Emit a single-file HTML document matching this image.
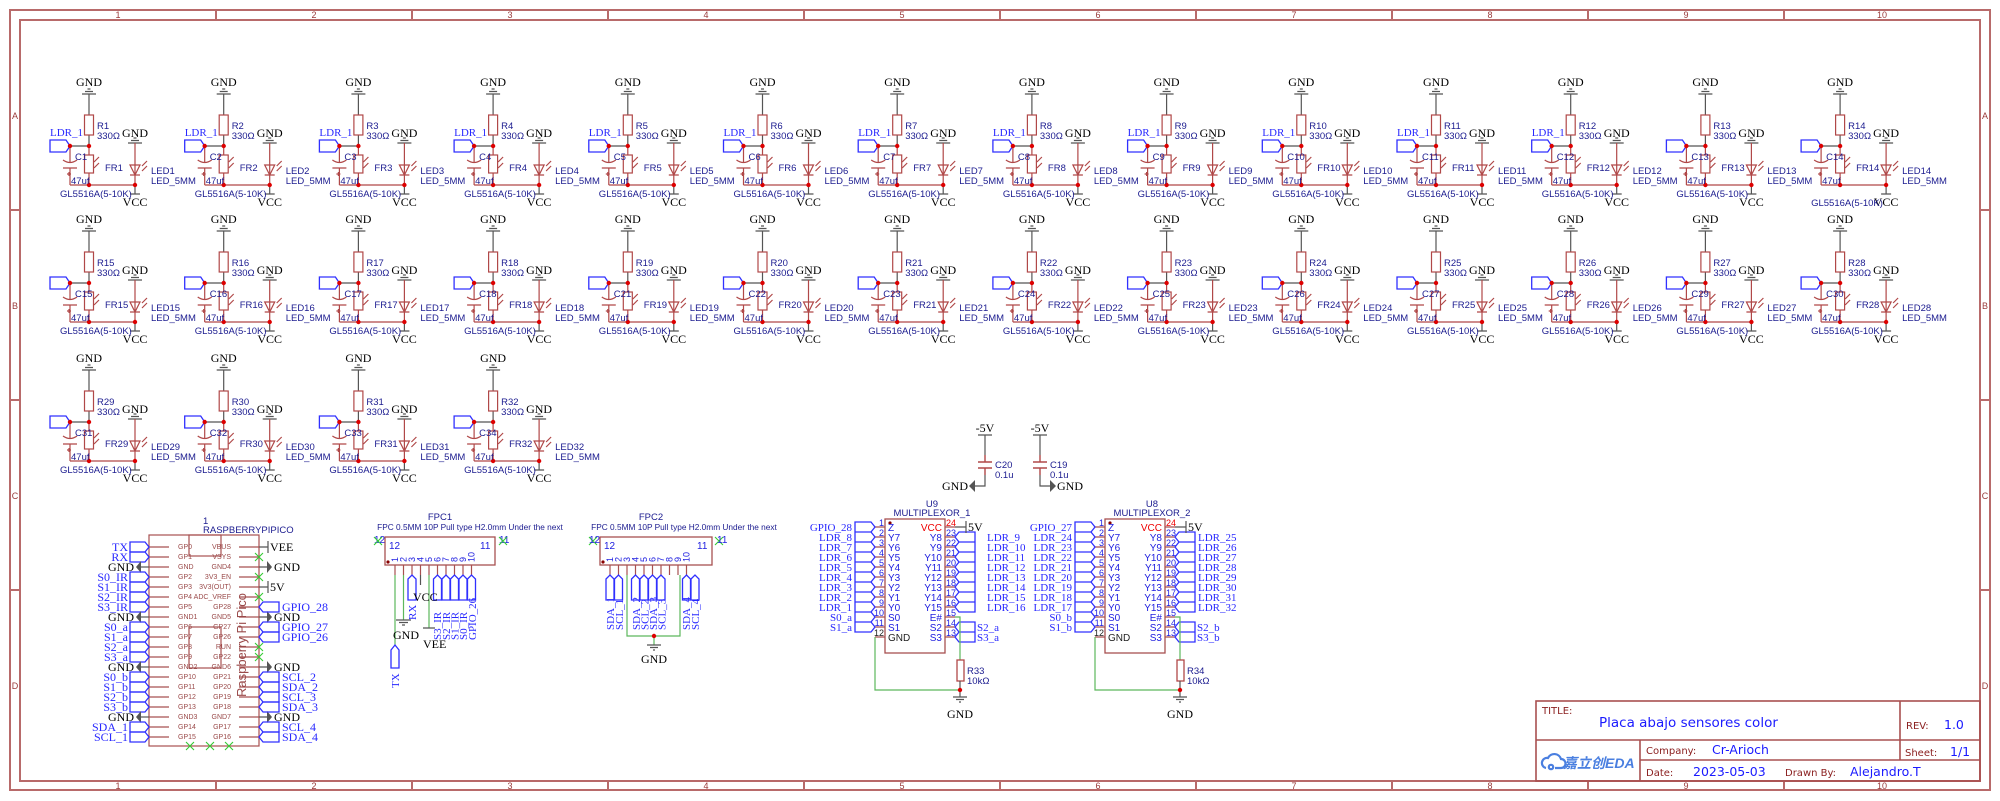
<!DOCTYPE html>
<html><head><meta charset="utf-8">
<style>
html,body{margin:0;padding:0;background:#fff;}
svg{display:block;}
.g{font-family:"Liberation Serif",serif;font-size:12px;fill:#000;text-anchor:middle;}
.gl{font-family:"Liberation Serif",serif;font-size:12px;fill:#000;}
.gr{font-family:"Liberation Serif",serif;font-size:12px;fill:#000;text-anchor:end;}
.l{font-family:"Liberation Sans",sans-serif;font-size:9.5px;fill:#1b1b8f;}
.lc{font-family:"Liberation Sans",sans-serif;font-size:9.5px;fill:#1b1b8f;text-anchor:middle;}
.d{font-family:"Liberation Sans",sans-serif;font-size:8.3px;fill:#1b1b8f;text-anchor:middle;}
.b{font-family:"Liberation Serif",serif;font-size:11px;fill:#2828ff;}
.br{font-family:"Liberation Serif",serif;font-size:11px;fill:#2828ff;text-anchor:end;}
.p{font-family:"Liberation Sans",sans-serif;font-size:7px;fill:#9a4a4a;}
.pr{font-family:"Liberation Sans",sans-serif;font-size:7px;fill:#9a4a4a;text-anchor:end;}
.f{font-family:"Liberation Sans",sans-serif;font-size:9px;fill:#9a3a3a;text-anchor:middle;}
.u{font-family:"Liberation Sans",sans-serif;font-size:11px;fill:#2020e0;}
.ur{font-family:"Liberation Sans",sans-serif;font-size:11px;fill:#2020e0;text-anchor:end;}
.t{font-family:"DejaVu Sans","Liberation Sans",sans-serif;font-size:11px;fill:#8b2020;}
.tv{font-family:"DejaVu Sans","Liberation Sans",sans-serif;font-size:12.5px;fill:#1a1aff;}
</style></head><body>
<svg width="2000" height="801" viewBox="0 0 2000 801" xmlns="http://www.w3.org/2000/svg">
<defs>
<g id="cell">
 <g stroke="#555" stroke-width="1.2" fill="none">
  <path d="M0,-52V-31M0,-11V0M-19,0H0M-1.5,-57H1.5M-4,-54.5H4M-7,-52H7"/>
  <path d="M44.5,-8H47.5M42,-5.5H50M39,-3H53M46,39V48M41,48H51"/>
 </g>
 <g stroke="#b04848" stroke-width="1.2" fill="none">
  <rect x="-4.5" y="-31" width="9" height="20"/>
  <path d="M0,0V9M0,27V39M-19,39H46M-19,0V16M-19,22V39M46,-3V39"/>
  <rect x="-4.5" y="9" width="9" height="18"/>
  <path d="M10,11L5,16M10,17L5,22M-26,14Q-19,19 -12,14M-26,22H-12"/>
  <path d="M41,19H51L46,29ZM41,29H51M53,20L58,15M53,25L58,20"/>
  <path d="M-22,28H-18M-20,26V30"/>
 </g>
 <polygon points="-39,-6 -23,-6 -19,0 -23,6 -39,6" fill="none" stroke="#3030ff" stroke-width="1.3"/>
 <g fill="#d00"><circle cx="0" cy="0" r="2.2"/><circle cx="-19" cy="0" r="2.2"/><circle cx="0" cy="39" r="2.2"/><circle cx="46" cy="39" r="2.2"/></g>
</g>
<g id="lf"><polygon points="0,-5 15,-5 19,0 15,5 0,5" fill="none" stroke="#3030ff" stroke-width="1.3"/></g>
<g id="rf"><polygon points="0,0 4,-5 20,-5 20,5 4,5" fill="none" stroke="#3030ff" stroke-width="1.3"/></g>
<g id="gl"><path d="M149,0H141" stroke="#555" stroke-width="1.2"/><polygon points="141,-6 141,6 136,0" fill="#555"/></g>
</defs>

<!-- frame -->
<g fill="none" stroke="#b86a6a" stroke-width="2">
 <rect x="10" y="10" width="1980" height="780"/>
 <rect x="20" y="20" width="1960" height="761"/>
 <path d="M216,10V20M412,10V20M608,10V20M804,10V20M1000,10V20M1196,10V20M1392,10V20M1588,10V20M1784,10V20"/>
 <path d="M216,781V790M412,781V790M608,781V790M804,781V790M1000,781V790M1196,781V790M1392,781V790M1588,781V790M1784,781V790"/>
 <path d="M10,210H20M10,400H20M10,590H20M1980,210H1990M1980,400H1990M1980,590H1990"/>
</g>
<g class="f">
 <text x="118" y="18">1</text><text x="314" y="18">2</text><text x="510" y="18">3</text><text x="706" y="18">4</text><text x="902" y="18">5</text><text x="1098" y="18">6</text><text x="1294" y="18">7</text><text x="1490" y="18">8</text><text x="1686" y="18">9</text><text x="1882" y="18">10</text>
 <text x="118" y="789">1</text><text x="314" y="789">2</text><text x="510" y="789">3</text><text x="706" y="789">4</text><text x="902" y="789">5</text><text x="1098" y="789">6</text><text x="1294" y="789">7</text><text x="1490" y="789">8</text><text x="1686" y="789">9</text><text x="1882" y="789">10</text>
 <text x="15" y="119">A</text><text x="15" y="309">B</text><text x="15" y="499">C</text><text x="15" y="689">D</text>
 <text x="1985" y="119">A</text><text x="1985" y="309">B</text><text x="1985" y="499">C</text><text x="1985" y="689">D</text>
</g>

<!-- ROW 1 -->
<g transform="translate(89,146)"><use href="#cell"/><text class="g" x="0" y="-60">GND</text><text class="g" x="46" y="-9">GND</text><text class="g" x="46" y="60">VCC</text><text class="l" x="8" y="-17">R1</text><text class="l" x="8" y="-7">330Ω</text><text class="l" x="-14" y="14">C1</text><text class="l" x="16" y="25">FR1</text><text class="l" x="62" y="28">LED1</text><text class="l" x="62" y="38">LED_5MM</text><text class="l" x="-18" y="38">47uf</text><text class="l" x="-29" y="51">GL5516A(5-10K)</text><text class="b" x="-39" y="-10">LDR_1</text></g>
<g transform="translate(223.7,146)"><use href="#cell"/><text class="g" x="0" y="-60">GND</text><text class="g" x="46" y="-9">GND</text><text class="g" x="46" y="60">VCC</text><text class="l" x="8" y="-17">R2</text><text class="l" x="8" y="-7">330Ω</text><text class="l" x="-14" y="14">C2</text><text class="l" x="16" y="25">FR2</text><text class="l" x="62" y="28">LED2</text><text class="l" x="62" y="38">LED_5MM</text><text class="l" x="-18" y="38">47uf</text><text class="l" x="-29" y="51">GL5516A(5-10K)</text><text class="b" x="-39" y="-10">LDR_1</text></g>
<g transform="translate(358.4,146)"><use href="#cell"/><text class="g" x="0" y="-60">GND</text><text class="g" x="46" y="-9">GND</text><text class="g" x="46" y="60">VCC</text><text class="l" x="8" y="-17">R3</text><text class="l" x="8" y="-7">330Ω</text><text class="l" x="-14" y="14">C3</text><text class="l" x="16" y="25">FR3</text><text class="l" x="62" y="28">LED3</text><text class="l" x="62" y="38">LED_5MM</text><text class="l" x="-18" y="38">47uf</text><text class="l" x="-29" y="51">GL5516A(5-10K)</text><text class="b" x="-39" y="-10">LDR_1</text></g>
<g transform="translate(493.1,146)"><use href="#cell"/><text class="g" x="0" y="-60">GND</text><text class="g" x="46" y="-9">GND</text><text class="g" x="46" y="60">VCC</text><text class="l" x="8" y="-17">R4</text><text class="l" x="8" y="-7">330Ω</text><text class="l" x="-14" y="14">C4</text><text class="l" x="16" y="25">FR4</text><text class="l" x="62" y="28">LED4</text><text class="l" x="62" y="38">LED_5MM</text><text class="l" x="-18" y="38">47uf</text><text class="l" x="-29" y="51">GL5516A(5-10K)</text><text class="b" x="-39" y="-10">LDR_1</text></g>
<g transform="translate(627.8,146)"><use href="#cell"/><text class="g" x="0" y="-60">GND</text><text class="g" x="46" y="-9">GND</text><text class="g" x="46" y="60">VCC</text><text class="l" x="8" y="-17">R5</text><text class="l" x="8" y="-7">330Ω</text><text class="l" x="-14" y="14">C5</text><text class="l" x="16" y="25">FR5</text><text class="l" x="62" y="28">LED5</text><text class="l" x="62" y="38">LED_5MM</text><text class="l" x="-18" y="38">47uf</text><text class="l" x="-29" y="51">GL5516A(5-10K)</text><text class="b" x="-39" y="-10">LDR_1</text></g>
<g transform="translate(762.5,146)"><use href="#cell"/><text class="g" x="0" y="-60">GND</text><text class="g" x="46" y="-9">GND</text><text class="g" x="46" y="60">VCC</text><text class="l" x="8" y="-17">R6</text><text class="l" x="8" y="-7">330Ω</text><text class="l" x="-14" y="14">C6</text><text class="l" x="16" y="25">FR6</text><text class="l" x="62" y="28">LED6</text><text class="l" x="62" y="38">LED_5MM</text><text class="l" x="-18" y="38">47uf</text><text class="l" x="-29" y="51">GL5516A(5-10K)</text><text class="b" x="-39" y="-10">LDR_1</text></g>
<g transform="translate(897.2,146)"><use href="#cell"/><text class="g" x="0" y="-60">GND</text><text class="g" x="46" y="-9">GND</text><text class="g" x="46" y="60">VCC</text><text class="l" x="8" y="-17">R7</text><text class="l" x="8" y="-7">330Ω</text><text class="l" x="-14" y="14">C7</text><text class="l" x="16" y="25">FR7</text><text class="l" x="62" y="28">LED7</text><text class="l" x="62" y="38">LED_5MM</text><text class="l" x="-18" y="38">47uf</text><text class="l" x="-29" y="51">GL5516A(5-10K)</text><text class="b" x="-39" y="-10">LDR_1</text></g>
<g transform="translate(1031.9,146)"><use href="#cell"/><text class="g" x="0" y="-60">GND</text><text class="g" x="46" y="-9">GND</text><text class="g" x="46" y="60">VCC</text><text class="l" x="8" y="-17">R8</text><text class="l" x="8" y="-7">330Ω</text><text class="l" x="-14" y="14">C8</text><text class="l" x="16" y="25">FR8</text><text class="l" x="62" y="28">LED8</text><text class="l" x="62" y="38">LED_5MM</text><text class="l" x="-18" y="38">47uf</text><text class="l" x="-29" y="51">GL5516A(5-10K)</text><text class="b" x="-39" y="-10">LDR_1</text></g>
<g transform="translate(1166.6,146)"><use href="#cell"/><text class="g" x="0" y="-60">GND</text><text class="g" x="46" y="-9">GND</text><text class="g" x="46" y="60">VCC</text><text class="l" x="8" y="-17">R9</text><text class="l" x="8" y="-7">330Ω</text><text class="l" x="-14" y="14">C9</text><text class="l" x="16" y="25">FR9</text><text class="l" x="62" y="28">LED9</text><text class="l" x="62" y="38">LED_5MM</text><text class="l" x="-18" y="38">47uf</text><text class="l" x="-29" y="51">GL5516A(5-10K)</text><text class="b" x="-39" y="-10">LDR_1</text></g>
<g transform="translate(1301.3,146)"><use href="#cell"/><text class="g" x="0" y="-60">GND</text><text class="g" x="46" y="-9">GND</text><text class="g" x="46" y="60">VCC</text><text class="l" x="8" y="-17">R10</text><text class="l" x="8" y="-7">330Ω</text><text class="l" x="-14" y="14">C10</text><text class="l" x="16" y="25">FR10</text><text class="l" x="62" y="28">LED10</text><text class="l" x="62" y="38">LED_5MM</text><text class="l" x="-18" y="38">47uf</text><text class="l" x="-29" y="51">GL5516A(5-10K)</text><text class="b" x="-39" y="-10">LDR_1</text></g>
<g transform="translate(1436,146)"><use href="#cell"/><text class="g" x="0" y="-60">GND</text><text class="g" x="46" y="-9">GND</text><text class="g" x="46" y="60">VCC</text><text class="l" x="8" y="-17">R11</text><text class="l" x="8" y="-7">330Ω</text><text class="l" x="-14" y="14">C11</text><text class="l" x="16" y="25">FR11</text><text class="l" x="62" y="28">LED11</text><text class="l" x="62" y="38">LED_5MM</text><text class="l" x="-18" y="38">47uf</text><text class="l" x="-29" y="51">GL5516A(5-10K)</text><text class="b" x="-39" y="-10">LDR_1</text></g>
<g transform="translate(1570.7,146)"><use href="#cell"/><text class="g" x="0" y="-60">GND</text><text class="g" x="46" y="-9">GND</text><text class="g" x="46" y="60">VCC</text><text class="l" x="8" y="-17">R12</text><text class="l" x="8" y="-7">330Ω</text><text class="l" x="-14" y="14">C12</text><text class="l" x="16" y="25">FR12</text><text class="l" x="62" y="28">LED12</text><text class="l" x="62" y="38">LED_5MM</text><text class="l" x="-18" y="38">47uf</text><text class="l" x="-29" y="51">GL5516A(5-10K)</text><text class="b" x="-39" y="-10">LDR_1</text></g>
<g transform="translate(1705.4,146)"><use href="#cell"/><text class="g" x="0" y="-60">GND</text><text class="g" x="46" y="-9">GND</text><text class="g" x="46" y="60">VCC</text><text class="l" x="8" y="-17">R13</text><text class="l" x="8" y="-7">330Ω</text><text class="l" x="-14" y="14">C13</text><text class="l" x="16" y="25">FR13</text><text class="l" x="62" y="28">LED13</text><text class="l" x="62" y="38">LED_5MM</text><text class="l" x="-18" y="38">47uf</text><text class="l" x="-29" y="51">GL5516A(5-10K)</text></g>
<g transform="translate(1840.1,146)"><use href="#cell"/><text class="g" x="0" y="-60">GND</text><text class="g" x="46" y="-9">GND</text><text class="g" x="46" y="60">VCC</text><text class="l" x="8" y="-17">R14</text><text class="l" x="8" y="-7">330Ω</text><text class="l" x="-14" y="14">C14</text><text class="l" x="16" y="25">FR14</text><text class="l" x="62" y="28">LED14</text><text class="l" x="62" y="38">LED_5MM</text><text class="l" x="-18" y="38">47uf</text><text class="l" x="-29" y="60">GL5516A(5-10K)</text></g>

<!-- ROW 2 -->
<g transform="translate(89,283)"><use href="#cell"/><text class="g" x="0" y="-60">GND</text><text class="g" x="46" y="-9">GND</text><text class="g" x="46" y="60">VCC</text><text class="l" x="8" y="-17">R15</text><text class="l" x="8" y="-7">330Ω</text><text class="l" x="-14" y="14">C15</text><text class="l" x="16" y="25">FR15</text><text class="l" x="62" y="28">LED15</text><text class="l" x="62" y="38">LED_5MM</text><text class="l" x="-18" y="38">47uf</text><text class="l" x="-29" y="51">GL5516A(5-10K)</text></g>
<g transform="translate(223.7,283)"><use href="#cell"/><text class="g" x="0" y="-60">GND</text><text class="g" x="46" y="-9">GND</text><text class="g" x="46" y="60">VCC</text><text class="l" x="8" y="-17">R16</text><text class="l" x="8" y="-7">330Ω</text><text class="l" x="-14" y="14">C16</text><text class="l" x="16" y="25">FR16</text><text class="l" x="62" y="28">LED16</text><text class="l" x="62" y="38">LED_5MM</text><text class="l" x="-18" y="38">47uf</text><text class="l" x="-29" y="51">GL5516A(5-10K)</text></g>
<g transform="translate(358.4,283)"><use href="#cell"/><text class="g" x="0" y="-60">GND</text><text class="g" x="46" y="-9">GND</text><text class="g" x="46" y="60">VCC</text><text class="l" x="8" y="-17">R17</text><text class="l" x="8" y="-7">330Ω</text><text class="l" x="-14" y="14">C17</text><text class="l" x="16" y="25">FR17</text><text class="l" x="62" y="28">LED17</text><text class="l" x="62" y="38">LED_5MM</text><text class="l" x="-18" y="38">47uf</text><text class="l" x="-29" y="51">GL5516A(5-10K)</text></g>
<g transform="translate(493.1,283)"><use href="#cell"/><text class="g" x="0" y="-60">GND</text><text class="g" x="46" y="-9">GND</text><text class="g" x="46" y="60">VCC</text><text class="l" x="8" y="-17">R18</text><text class="l" x="8" y="-7">330Ω</text><text class="l" x="-14" y="14">C18</text><text class="l" x="16" y="25">FR18</text><text class="l" x="62" y="28">LED18</text><text class="l" x="62" y="38">LED_5MM</text><text class="l" x="-18" y="38">47uf</text><text class="l" x="-29" y="51">GL5516A(5-10K)</text></g>
<g transform="translate(627.8,283)"><use href="#cell"/><text class="g" x="0" y="-60">GND</text><text class="g" x="46" y="-9">GND</text><text class="g" x="46" y="60">VCC</text><text class="l" x="8" y="-17">R19</text><text class="l" x="8" y="-7">330Ω</text><text class="l" x="-14" y="14">C21</text><text class="l" x="16" y="25">FR19</text><text class="l" x="62" y="28">LED19</text><text class="l" x="62" y="38">LED_5MM</text><text class="l" x="-18" y="38">47uf</text><text class="l" x="-29" y="51">GL5516A(5-10K)</text></g>
<g transform="translate(762.5,283)"><use href="#cell"/><text class="g" x="0" y="-60">GND</text><text class="g" x="46" y="-9">GND</text><text class="g" x="46" y="60">VCC</text><text class="l" x="8" y="-17">R20</text><text class="l" x="8" y="-7">330Ω</text><text class="l" x="-14" y="14">C22</text><text class="l" x="16" y="25">FR20</text><text class="l" x="62" y="28">LED20</text><text class="l" x="62" y="38">LED_5MM</text><text class="l" x="-18" y="38">47uf</text><text class="l" x="-29" y="51">GL5516A(5-10K)</text></g>
<g transform="translate(897.2,283)"><use href="#cell"/><text class="g" x="0" y="-60">GND</text><text class="g" x="46" y="-9">GND</text><text class="g" x="46" y="60">VCC</text><text class="l" x="8" y="-17">R21</text><text class="l" x="8" y="-7">330Ω</text><text class="l" x="-14" y="14">C23</text><text class="l" x="16" y="25">FR21</text><text class="l" x="62" y="28">LED21</text><text class="l" x="62" y="38">LED_5MM</text><text class="l" x="-18" y="38">47uf</text><text class="l" x="-29" y="51">GL5516A(5-10K)</text></g>
<g transform="translate(1031.9,283)"><use href="#cell"/><text class="g" x="0" y="-60">GND</text><text class="g" x="46" y="-9">GND</text><text class="g" x="46" y="60">VCC</text><text class="l" x="8" y="-17">R22</text><text class="l" x="8" y="-7">330Ω</text><text class="l" x="-14" y="14">C24</text><text class="l" x="16" y="25">FR22</text><text class="l" x="62" y="28">LED22</text><text class="l" x="62" y="38">LED_5MM</text><text class="l" x="-18" y="38">47uf</text><text class="l" x="-29" y="51">GL5516A(5-10K)</text></g>
<g transform="translate(1166.6,283)"><use href="#cell"/><text class="g" x="0" y="-60">GND</text><text class="g" x="46" y="-9">GND</text><text class="g" x="46" y="60">VCC</text><text class="l" x="8" y="-17">R23</text><text class="l" x="8" y="-7">330Ω</text><text class="l" x="-14" y="14">C25</text><text class="l" x="16" y="25">FR23</text><text class="l" x="62" y="28">LED23</text><text class="l" x="62" y="38">LED_5MM</text><text class="l" x="-18" y="38">47uf</text><text class="l" x="-29" y="51">GL5516A(5-10K)</text></g>
<g transform="translate(1301.3,283)"><use href="#cell"/><text class="g" x="0" y="-60">GND</text><text class="g" x="46" y="-9">GND</text><text class="g" x="46" y="60">VCC</text><text class="l" x="8" y="-17">R24</text><text class="l" x="8" y="-7">330Ω</text><text class="l" x="-14" y="14">C26</text><text class="l" x="16" y="25">FR24</text><text class="l" x="62" y="28">LED24</text><text class="l" x="62" y="38">LED_5MM</text><text class="l" x="-18" y="38">47uf</text><text class="l" x="-29" y="51">GL5516A(5-10K)</text></g>
<g transform="translate(1436,283)"><use href="#cell"/><text class="g" x="0" y="-60">GND</text><text class="g" x="46" y="-9">GND</text><text class="g" x="46" y="60">VCC</text><text class="l" x="8" y="-17">R25</text><text class="l" x="8" y="-7">330Ω</text><text class="l" x="-14" y="14">C27</text><text class="l" x="16" y="25">FR25</text><text class="l" x="62" y="28">LED25</text><text class="l" x="62" y="38">LED_5MM</text><text class="l" x="-18" y="38">47uf</text><text class="l" x="-29" y="51">GL5516A(5-10K)</text></g>
<g transform="translate(1570.7,283)"><use href="#cell"/><text class="g" x="0" y="-60">GND</text><text class="g" x="46" y="-9">GND</text><text class="g" x="46" y="60">VCC</text><text class="l" x="8" y="-17">R26</text><text class="l" x="8" y="-7">330Ω</text><text class="l" x="-14" y="14">C28</text><text class="l" x="16" y="25">FR26</text><text class="l" x="62" y="28">LED26</text><text class="l" x="62" y="38">LED_5MM</text><text class="l" x="-18" y="38">47uf</text><text class="l" x="-29" y="51">GL5516A(5-10K)</text></g>
<g transform="translate(1705.4,283)"><use href="#cell"/><text class="g" x="0" y="-60">GND</text><text class="g" x="46" y="-9">GND</text><text class="g" x="46" y="60">VCC</text><text class="l" x="8" y="-17">R27</text><text class="l" x="8" y="-7">330Ω</text><text class="l" x="-14" y="14">C29</text><text class="l" x="16" y="25">FR27</text><text class="l" x="62" y="28">LED27</text><text class="l" x="62" y="38">LED_5MM</text><text class="l" x="-18" y="38">47uf</text><text class="l" x="-29" y="51">GL5516A(5-10K)</text></g>
<g transform="translate(1840.1,283)"><use href="#cell"/><text class="g" x="0" y="-60">GND</text><text class="g" x="46" y="-9">GND</text><text class="g" x="46" y="60">VCC</text><text class="l" x="8" y="-17">R28</text><text class="l" x="8" y="-7">330Ω</text><text class="l" x="-14" y="14">C30</text><text class="l" x="16" y="25">FR28</text><text class="l" x="62" y="28">LED28</text><text class="l" x="62" y="38">LED_5MM</text><text class="l" x="-18" y="38">47uf</text><text class="l" x="-29" y="51">GL5516A(5-10K)</text></g>

<!-- ROW 3 -->
<g transform="translate(89,422)"><use href="#cell"/><text class="g" x="0" y="-60">GND</text><text class="g" x="46" y="-9">GND</text><text class="g" x="46" y="60">VCC</text><text class="l" x="8" y="-17">R29</text><text class="l" x="8" y="-7">330Ω</text><text class="l" x="-14" y="14">C31</text><text class="l" x="16" y="25">FR29</text><text class="l" x="62" y="28">LED29</text><text class="l" x="62" y="38">LED_5MM</text><text class="l" x="-18" y="38">47uf</text><text class="l" x="-29" y="51">GL5516A(5-10K)</text></g>
<g transform="translate(223.7,422)"><use href="#cell"/><text class="g" x="0" y="-60">GND</text><text class="g" x="46" y="-9">GND</text><text class="g" x="46" y="60">VCC</text><text class="l" x="8" y="-17">R30</text><text class="l" x="8" y="-7">330Ω</text><text class="l" x="-14" y="14">C32</text><text class="l" x="16" y="25">FR30</text><text class="l" x="62" y="28">LED30</text><text class="l" x="62" y="38">LED_5MM</text><text class="l" x="-18" y="38">47uf</text><text class="l" x="-29" y="51">GL5516A(5-10K)</text></g>
<g transform="translate(358.4,422)"><use href="#cell"/><text class="g" x="0" y="-60">GND</text><text class="g" x="46" y="-9">GND</text><text class="g" x="46" y="60">VCC</text><text class="l" x="8" y="-17">R31</text><text class="l" x="8" y="-7">330Ω</text><text class="l" x="-14" y="14">C33</text><text class="l" x="16" y="25">FR31</text><text class="l" x="62" y="28">LED31</text><text class="l" x="62" y="38">LED_5MM</text><text class="l" x="-18" y="38">47uf</text><text class="l" x="-29" y="51">GL5516A(5-10K)</text></g>
<g transform="translate(493.1,422)"><use href="#cell"/><text class="g" x="0" y="-60">GND</text><text class="g" x="46" y="-9">GND</text><text class="g" x="46" y="60">VCC</text><text class="l" x="8" y="-17">R32</text><text class="l" x="8" y="-7">330Ω</text><text class="l" x="-14" y="14">C34</text><text class="l" x="16" y="25">FR32</text><text class="l" x="62" y="28">LED32</text><text class="l" x="62" y="38">LED_5MM</text><text class="l" x="-18" y="38">47uf</text><text class="l" x="-29" y="51">GL5516A(5-10K)</text></g>

<!-- RASPBERRY PI PICO -->
<text class="l" x="203" y="524">1</text>
<text class="l" x="203" y="533">RASPBERRYPIPICO</text>
<g fill="none" stroke="#a85050" stroke-width="1.2">
 <rect x="149" y="535" width="110" height="211"/>
 <rect x="189" y="535" width="32" height="21"/>
 <rect x="189" y="627" width="32" height="41"/>
 <path d="M149,547H169M149,557H169M149,567H169M149,577H169M149,587H169M149,597H169M149,607H169M149,617H169M149,627H169M149,637H169M149,647H169M149,657H169M149,667H169M149,677H169M149,687H169M149,697H169M149,707H169M149,717H169M149,727H169M149,737H169"/>
 <path d="M239,547H259M239,557H259M239,567H259M239,577H259M239,587H259M239,597H259M239,607H259M239,617H259M239,627H259M239,637H259M239,647H259M239,657H259M239,667H259M239,677H259M239,687H259M239,697H259M239,707H259M239,717H259M239,727H259M239,737H259"/>
</g>
<g class="p">
 <text x="178" y="549">GP0</text><text x="178" y="559">GP1</text><text x="178" y="569">GND</text><text x="178" y="579">GP2</text><text x="178" y="589">GP3</text><text x="178" y="599">GP4</text><text x="178" y="609">GP5</text><text x="178" y="619">GND1</text><text x="178" y="629">GP6</text><text x="178" y="639">GP7</text><text x="178" y="649">GP8</text><text x="178" y="659">GP9</text><text x="178" y="669">GND2</text><text x="178" y="679">GP10</text><text x="178" y="689">GP11</text><text x="178" y="699">GP12</text><text x="178" y="709">GP13</text><text x="178" y="719">GND3</text><text x="178" y="729">GP14</text><text x="178" y="739">GP15</text>
</g>
<g class="pr">
 <text x="231" y="549">VBUS</text><text x="231" y="559">VSYS</text><text x="231" y="569">GND4</text><text x="231" y="579">3V3_EN</text><text x="231" y="589">3V3(OUT)</text><text x="231" y="599">ADC_VREF</text><text x="231" y="609">GP28</text><text x="231" y="619">GND5</text><text x="231" y="629">GP27</text><text x="231" y="639">GP26</text><text x="231" y="649">RUN</text><text x="231" y="659">GP22</text><text x="231" y="669">GND6</text><text x="231" y="679">GP21</text><text x="231" y="689">GP20</text><text x="231" y="699">GP19</text><text x="231" y="709">GP18</text><text x="231" y="719">GND7</text><text x="231" y="729">GP17</text><text x="231" y="739">GP16</text>
</g>
<text x="0" y="0" transform="translate(246,645) rotate(-90)" style="font-family:'Liberation Sans',sans-serif;font-size:13px;fill:#9a4a4a;text-anchor:middle">Raspberry Pi Pico</text>
<use href="#lf" x="130" y="547"/><use href="#lf" x="130" y="557"/>
<use href="#gl" y="567"/>
<use href="#lf" x="130" y="577"/><use href="#lf" x="130" y="587"/><use href="#lf" x="130" y="597"/><use href="#lf" x="130" y="607"/>
<use href="#gl" y="617"/>
<use href="#lf" x="130" y="627"/><use href="#lf" x="130" y="637"/><use href="#lf" x="130" y="647"/><use href="#lf" x="130" y="657"/>
<use href="#gl" y="667"/>
<use href="#lf" x="130" y="677"/><use href="#lf" x="130" y="687"/><use href="#lf" x="130" y="697"/><use href="#lf" x="130" y="707"/>
<use href="#gl" y="717"/>
<use href="#lf" x="130" y="727"/><use href="#lf" x="130" y="737"/>
<g class="br" style="font-size:12px">
 <text x="128" y="551">TX</text><text x="128" y="561">RX</text><text x="128" y="581">S0_IR</text><text x="128" y="591">S1_IR</text><text x="128" y="601">S2_IR</text><text x="128" y="611">S3_IR</text><text x="128" y="631">S0_a</text><text x="128" y="641">S1_a</text><text x="128" y="651">S2_a</text><text x="128" y="661">S3_a</text><text x="128" y="681">S0_b</text><text x="128" y="691">S1_b</text><text x="128" y="701">S2_b</text><text x="128" y="711">S3_b</text><text x="128" y="731">SDA_1</text><text x="128" y="741">SCL_1</text>
</g>
<g class="gr"><text x="134" y="571">GND</text><text x="134" y="621">GND</text><text x="134" y="671">GND</text><text x="134" y="721">GND</text></g>
<g stroke="#555" stroke-width="1.2" fill="none">
 <path d="M259,547H268M268,541V553M259,587H268M268,581V593"/>
 <path d="M259,567H267M259,617H267M259,667H267M259,717H267"/>
</g>
<g fill="#555"><polygon points="267,561 267,573 272,567"/><polygon points="267,611 267,623 272,617"/><polygon points="267,661 267,673 272,667"/><polygon points="267,711 267,723 272,717"/></g>
<use href="#rf" x="259" y="607"/><use href="#rf" x="259" y="627"/><use href="#rf" x="259" y="637"/>
<use href="#rf" x="259" y="677"/><use href="#rf" x="259" y="687"/><use href="#rf" x="259" y="697"/><use href="#rf" x="259" y="707"/>
<use href="#rf" x="259" y="727"/><use href="#rf" x="259" y="737"/>
<g class="gl"><text x="270" y="551">VEE</text><text x="274" y="571">GND</text><text x="270" y="591">5V</text><text x="274" y="621">GND</text><text x="274" y="671">GND</text><text x="274" y="721">GND</text></g>
<g class="b" style="font-size:12px"><text x="282" y="611">GPIO_28</text><text x="282" y="631">GPIO_27</text><text x="282" y="641">GPIO_26</text><text x="282" y="681">SCL_2</text><text x="282" y="691">SDA_2</text><text x="282" y="701">SCL_3</text><text x="282" y="711">SDA_3</text><text x="282" y="731">SCL_4</text><text x="282" y="741">SDA_4</text></g>
<g stroke="#3c3" stroke-width="1.1"><path d="M255,553l8,8m0,-8l-8,8M255,573l8,8m0,-8l-8,8M255,593l8,8m0,-8l-8,8M255,643l8,8m0,-8l-8,8M255,653l8,8m0,-8l-8,8M186,742l8,8m0,-8l-8,8M206,742l8,8m0,-8l-8,8M225,742l8,8m0,-8l-8,8"/></g>

<!-- FPC1 -->
<text class="lc" x="440" y="520">FPC1</text>
<text class="d" x="470" y="530">FPC 0.5MM 10P Pull type H2.0mm Under the next</text>
<rect x="385" y="537" width="110" height="28" fill="none" stroke="#a85050" stroke-width="1.3"/>
<text class="u" x="389" y="549" style="font-size:10px">12</text><text class="u" x="480" y="549" style="font-size:10px">11</text>
<text class="u" x="374" y="543" style="font-size:10px">12</text><text class="u" x="499" y="543" style="font-size:10px">11</text>
<g stroke="#3c3" stroke-width="1.1"><path d="M374,537l8,8m0,-8l-8,8M499,537l8,8m0,-8l-8,8M589,537l8,8m0,-8l-8,8M715,537l8,8m0,-8l-8,8"/></g>
<circle cx="388" cy="562" r="1.6" fill="#800"/>
<g class="u" style="font-size:9px">
 <text transform="translate(398,562) rotate(-90)">1</text><text transform="translate(406.5,562) rotate(-90)">2</text><text transform="translate(415,562) rotate(-90)">3</text><text transform="translate(423.5,562) rotate(-90)">4</text><text transform="translate(432,562) rotate(-90)">5</text><text transform="translate(440.5,562) rotate(-90)">6</text><text transform="translate(449,562) rotate(-90)">7</text><text transform="translate(457.5,562) rotate(-90)">8</text><text transform="translate(466,562) rotate(-90)">9</text><text transform="translate(474.5,562) rotate(-90)">10</text>
</g>
<g stroke="#a85050" stroke-width="1.2"><path d="M395,565V575M403.5,565V575M412,565V575M420.5,565V575M429,565V575M437.5,565V575M446,565V575M454.5,565V575M463,565V575M471.5,565V575"/></g>
<g stroke="#5cb85c" stroke-width="1.2" fill="none"><path d="M395,575V645M403.5,575V620M429,575V628"/></g>
<g stroke="#555" stroke-width="1.2"><path d="M396,620H411M399,622.5H408M402,625H405M420.5,575V585M423,628H435"/></g>
<g fill="none" stroke="#3030ff" stroke-width="1.3">
 <path d="M391,650L395,645L399,650V668H391Z"/>
 <path d="M408,579L412,575L416,579V600H408Z"/>
</g>
<g fill="none" stroke="#3030ff" stroke-width="1.3">
 <polygon points="433.5,579 437.5,575 441.5,579 441.5,600 433.5,600"/>
 <polygon points="442,579 446,575 450,579 450,600 442,600"/>
 <polygon points="450.5,579 454.5,575 458.5,579 458.5,600 450.5,600"/>
 <polygon points="459,579 463,575 467,579 467,600 459,600"/>
 <polygon points="467.5,579 471.5,575 475.5,579 475.5,600 467.5,600"/>
</g>
<g class="gl"><text x="393" y="639">GND</text><text x="413" y="601">VCC</text><text x="423" y="648">VEE</text></g>
<g class="b">
 <text transform="translate(399,688) rotate(-90)">TX</text>
 <text transform="translate(416,620) rotate(-90)">RX</text>
 <text transform="translate(441,640) rotate(-90)">S3_IR</text>
 <text transform="translate(450,640) rotate(-90)">S2_IR</text>
 <text transform="translate(458.5,640) rotate(-90)">S1_IR</text>
 <text transform="translate(467,640) rotate(-90)">S0_IR</text>
 <text transform="translate(476,640) rotate(-90)">GPIO_26</text>
</g>

<!-- FPC2 -->
<text class="lc" x="651" y="520">FPC2</text>
<text class="d" x="684" y="530">FPC 0.5MM 10P Pull type H2.0mm Under the next</text>
<rect x="600" y="537" width="112" height="28" fill="none" stroke="#a85050" stroke-width="1.3"/>
<text class="u" x="604" y="549" style="font-size:10px">12</text><text class="u" x="697" y="549" style="font-size:10px">11</text>
<text class="u" x="589" y="543" style="font-size:10px">12</text><text class="u" x="717" y="543" style="font-size:10px">11</text>
<circle cx="603" cy="562" r="1.6" fill="#800"/>
<g class="u" style="font-size:9px">
 <text transform="translate(613,562) rotate(-90)">1</text><text transform="translate(621.5,562) rotate(-90)">2</text><text transform="translate(630,562) rotate(-90)">3</text><text transform="translate(638.5,562) rotate(-90)">4</text><text transform="translate(647,562) rotate(-90)">5</text><text transform="translate(655.5,562) rotate(-90)">6</text><text transform="translate(664,562) rotate(-90)">7</text><text transform="translate(672.5,562) rotate(-90)">8</text><text transform="translate(681,562) rotate(-90)">9</text><text transform="translate(689.5,562) rotate(-90)">10</text>
</g>
<g stroke="#a85050" stroke-width="1.2"><path d="M610,565V575M618.5,565V575M627,565V575M635.5,565V575M644,565V575M652.5,565V575M661,565V575M669.5,565V575M678,565V575M686.5,565V575"/></g>
<g stroke="#5cb85c" stroke-width="1.2" fill="none"><path d="M627,575V636H680V575M654,636V645"/></g>
<circle cx="654" cy="636" r="2.2" fill="#d00"/>
<g stroke="#555" stroke-width="1.2"><path d="M647,645H661M650,647.5H658M653,650H655"/></g>
<text class="g" x="654" y="663">GND</text>
<g fill="none" stroke="#3030ff" stroke-width="1.3">
 <polygon points="606,579 610,575 614,579 614,600 606,600"/>
 <polygon points="614.5,579 618.5,575 622.5,579 622.5,600 614.5,600"/>
 <polygon points="631.5,579 635.5,575 639.5,579 639.5,600 631.5,600"/>
 <polygon points="640,579 644,575 648,579 648,600 640,600"/>
 <polygon points="648.5,579 652.5,575 656.5,579 656.5,600 648.5,600"/>
 <polygon points="657,579 661,575 665,579 665,600 657,600"/>
 <polygon points="682.5,579 686.5,575 690.5,579 690.5,600 682.5,600"/>
 <polygon points="691,579 695,575 699,579 699,600 691,600"/>
</g>
<g class="b">
 <text transform="translate(614,630) rotate(-90)">SDA_1</text><text transform="translate(623,630) rotate(-90)">SCL_1</text>
 <text transform="translate(640,630) rotate(-90)">SDA_2</text><text transform="translate(648.5,630) rotate(-90)">SCL_2</text><text transform="translate(657,630) rotate(-90)">SDA_3</text><text transform="translate(665.5,630) rotate(-90)">SCL_3</text>
 <text transform="translate(690,630) rotate(-90)">SDA_4</text><text transform="translate(699,630) rotate(-90)">SCL_4</text>
</g>

<!-- caps C20 C19 -->
<g stroke="#555" stroke-width="1.2" fill="none"><path d="M978,435H992M985,435V455M1033,435H1047M1040,435V455M985,475V486H975M1040,475V486H1050"/></g>
<g stroke="#b04848" stroke-width="1.4" fill="none"><path d="M985,455V462M978,462H992M978,468H992M985,468V475M1040,455V462M1033,462H1047M1033,468H1047M1040,468V475"/></g>
<g fill="#555"><polygon points="975,480 975,492 969,486"/><polygon points="1050,480 1050,492 1056,486"/></g>
<g class="g"><text x="985" y="432">-5V</text><text x="1040" y="432">-5V</text></g>
<text class="gr" x="968" y="490">GND</text><text class="gl" x="1057" y="490">GND</text>
<text class="l" x="995" y="468">C20</text><text class="l" x="995" y="478">0.1u</text>
<text class="l" x="1050" y="468">C19</text><text class="l" x="1050" y="478">0.1u</text>

<!-- U9 -->
<text class="lc" x="932" y="507">U9</text><text class="lc" x="932" y="516">MULTIPLEXOR_1</text>
<rect x="885" y="519" width="60" height="134" fill="none" stroke="#a85050" stroke-width="1.3"/>
<circle cx="890" cy="523" r="1.6" fill="#800"/>
<g stroke="#a85050" stroke-width="1.2"><path d="M875,527H885M875,537H885M875,547H885M875,557H885M875,567H885M875,577H885M875,587H885M875,597H885M875,607H885M875,617H885M875,627H885M875,637H885M945,527H955M945,537H955M945,547H955M945,557H955M945,567H955M945,577H955M945,587H955M945,597H955M945,607H955M945,617H955M945,627H955M945,637H955"/></g>
<g class="u" style="font-size:10px"><text x="888" y="531">Z</text><text x="888" y="541">Y7</text><text x="888" y="551">Y6</text><text x="888" y="561">Y5</text><text x="888" y="571">Y4</text><text x="888" y="581">Y3</text><text x="888" y="591">Y2</text><text x="888" y="601">Y1</text><text x="888" y="611">Y0</text><text x="888" y="621">S0</text><text x="888" y="631">S1</text><text x="888" y="641" style="fill:#222">GND</text></g>
<g class="ur" style="font-size:10px"><text x="942" y="531" style="fill:#e00">VCC</text><text x="942" y="541">Y8</text><text x="942" y="551">Y9</text><text x="942" y="561">Y10</text><text x="942" y="571">Y11</text><text x="942" y="581">Y12</text><text x="942" y="591">Y13</text><text x="942" y="601">Y14</text><text x="942" y="611">Y15</text><text x="942" y="621">E#</text><text x="942" y="631">S2</text><text x="942" y="641">S3</text></g>
<g class="ur" style="font-size:9px"><text x="884" y="526">1</text><text x="884" y="536">2</text><text x="884" y="546">3</text><text x="884" y="556">4</text><text x="884" y="566">5</text><text x="884" y="576">6</text><text x="884" y="586">7</text><text x="884" y="596">8</text><text x="884" y="606">9</text><text x="884" y="616">10</text><text x="884" y="626">11</text><text x="884" y="636" style="fill:#222">12</text></g>
<g class="u" style="font-size:9px"><text x="946" y="526" style="fill:#e00">24</text><text x="946" y="536">23</text><text x="946" y="546">22</text><text x="946" y="556">21</text><text x="946" y="566">20</text><text x="946" y="576">19</text><text x="946" y="586">18</text><text x="946" y="596">17</text><text x="946" y="606">16</text><text x="946" y="616">15</text><text x="946" y="626">14</text><text x="946" y="636">13</text></g>
<g fill="none" stroke="#3030ff" stroke-width="1.3">
 <path d="M855,522H871L875,527L871,532H855ZM855,532H871L875,537L871,542H855ZM855,542H871L875,547L871,552H855ZM855,552H871L875,557L871,562H855ZM855,562H871L875,567L871,572H855ZM855,572H871L875,577L871,582H855ZM855,582H871L875,587L871,592H855ZM855,592H871L875,597L871,602H855ZM855,602H871L875,607L871,612H855ZM855,612H871L875,617L871,622H855ZM855,622H871L875,627L871,632H855Z"/>
 <path d="M955,537L959,532H975V542H959ZM955,547L959,542H975V552H959ZM955,557L959,552H975V562H959ZM955,567L959,562H975V572H959ZM955,577L959,572H975V582H959ZM955,587L959,582H975V592H959ZM955,597L959,592H975V602H959ZM955,607L959,602H975V612H959ZM955,627L959,622H975V632H959ZM955,637L959,632H975V642H959Z"/>
</g>
<g class="br"><text x="852" y="531">GPIO_28</text><text x="852" y="541">LDR_8</text><text x="852" y="551">LDR_7</text><text x="852" y="561">LDR_6</text><text x="852" y="571">LDR_5</text><text x="852" y="581">LDR_4</text><text x="852" y="591">LDR_3</text><text x="852" y="601">LDR_2</text><text x="852" y="611">LDR_1</text><text x="852" y="621">S0_a</text><text x="852" y="631">S1_a</text></g>
<g class="b"><text x="987" y="541">LDR_9</text><text x="987" y="551">LDR_10</text><text x="987" y="561">LDR_11</text><text x="987" y="571">LDR_12</text><text x="987" y="581">LDR_13</text><text x="987" y="591">LDR_14</text><text x="987" y="601">LDR_15</text><text x="987" y="611">LDR_16</text><text x="977" y="631">S2_a</text><text x="977" y="641">S3_a</text></g>
<g stroke="#555" stroke-width="1.2" fill="none"><path d="M955,527H966M966,521V533M960,690V697M953,697H967M956,699.5H964M959,702H961"/></g>
<text class="gl" x="968" y="531">5V</text>
<g stroke="#5cb85c" stroke-width="1.2" fill="none"><path d="M955,617H960V660M875,637V690H960"/></g>
<rect x="957" y="660" width="7" height="21" fill="none" stroke="#b04848" stroke-width="1.3"/>
<path d="M960,681V690" stroke="#555" stroke-width="1.2"/>
<circle cx="960" cy="690" r="2.2" fill="#d00"/>
<text class="l" x="967" y="674">R33</text><text class="l" x="967" y="684">10kΩ</text>
<text class="g" x="960" y="718">GND</text>

<!-- U8 -->
<text class="lc" x="1152" y="507">U8</text><text class="lc" x="1152" y="516">MULTIPLEXOR_2</text>
<rect x="1105" y="519" width="60" height="134" fill="none" stroke="#a85050" stroke-width="1.3"/>
<circle cx="1110" cy="523" r="1.6" fill="#800"/>
<g stroke="#a85050" stroke-width="1.2"><path d="M1095,527H1105M1095,537H1105M1095,547H1105M1095,557H1105M1095,567H1105M1095,577H1105M1095,587H1105M1095,597H1105M1095,607H1105M1095,617H1105M1095,627H1105M1095,637H1105M1165,527H1175M1165,537H1175M1165,547H1175M1165,557H1175M1165,567H1175M1165,577H1175M1165,587H1175M1165,597H1175M1165,607H1175M1165,617H1175M1165,627H1175M1165,637H1175"/></g>
<g class="u" style="font-size:10px"><text x="1108" y="531">Z</text><text x="1108" y="541">Y7</text><text x="1108" y="551">Y6</text><text x="1108" y="561">Y5</text><text x="1108" y="571">Y4</text><text x="1108" y="581">Y3</text><text x="1108" y="591">Y2</text><text x="1108" y="601">Y1</text><text x="1108" y="611">Y0</text><text x="1108" y="621">S0</text><text x="1108" y="631">S1</text><text x="1108" y="641" style="fill:#222">GND</text></g>
<g class="ur" style="font-size:10px"><text x="1162" y="531" style="fill:#e00">VCC</text><text x="1162" y="541">Y8</text><text x="1162" y="551">Y9</text><text x="1162" y="561">Y10</text><text x="1162" y="571">Y11</text><text x="1162" y="581">Y12</text><text x="1162" y="591">Y13</text><text x="1162" y="601">Y14</text><text x="1162" y="611">Y15</text><text x="1162" y="621">E#</text><text x="1162" y="631">S2</text><text x="1162" y="641">S3</text></g>
<g class="ur" style="font-size:9px"><text x="1104" y="526">1</text><text x="1104" y="536">2</text><text x="1104" y="546">3</text><text x="1104" y="556">4</text><text x="1104" y="566">5</text><text x="1104" y="576">6</text><text x="1104" y="586">7</text><text x="1104" y="596">8</text><text x="1104" y="606">9</text><text x="1104" y="616">10</text><text x="1104" y="626">11</text><text x="1104" y="636" style="fill:#222">12</text></g>
<g class="u" style="font-size:9px"><text x="1166" y="526" style="fill:#e00">24</text><text x="1166" y="536">23</text><text x="1166" y="546">22</text><text x="1166" y="556">21</text><text x="1166" y="566">20</text><text x="1166" y="576">19</text><text x="1166" y="586">18</text><text x="1166" y="596">17</text><text x="1166" y="606">16</text><text x="1166" y="616">15</text><text x="1166" y="626">14</text><text x="1166" y="636">13</text></g>
<g fill="none" stroke="#3030ff" stroke-width="1.3" transform="translate(220,0)">
 <path d="M855,522H871L875,527L871,532H855ZM855,532H871L875,537L871,542H855ZM855,542H871L875,547L871,552H855ZM855,552H871L875,557L871,562H855ZM855,562H871L875,567L871,572H855ZM855,572H871L875,577L871,582H855ZM855,582H871L875,587L871,592H855ZM855,592H871L875,597L871,602H855ZM855,602H871L875,607L871,612H855ZM855,612H871L875,617L871,622H855ZM855,622H871L875,627L871,632H855Z"/>
 <path d="M955,537L959,532H975V542H959ZM955,547L959,542H975V552H959ZM955,557L959,552H975V562H959ZM955,567L959,562H975V572H959ZM955,577L959,572H975V582H959ZM955,587L959,582H975V592H959ZM955,597L959,592H975V602H959ZM955,607L959,602H975V612H959ZM955,627L959,622H975V632H959ZM955,637L959,632H975V642H959Z"/>
</g>
<g class="br"><text x="1072" y="531">GPIO_27</text><text x="1072" y="541">LDR_24</text><text x="1072" y="551">LDR_23</text><text x="1072" y="561">LDR_22</text><text x="1072" y="571">LDR_21</text><text x="1072" y="581">LDR_20</text><text x="1072" y="591">LDR_19</text><text x="1072" y="601">LDR_18</text><text x="1072" y="611">LDR_17</text><text x="1072" y="621">S0_b</text><text x="1072" y="631">S1_b</text></g>
<g class="b"><text x="1198" y="541">LDR_25</text><text x="1198" y="551">LDR_26</text><text x="1198" y="561">LDR_27</text><text x="1198" y="571">LDR_28</text><text x="1198" y="581">LDR_29</text><text x="1198" y="591">LDR_30</text><text x="1198" y="601">LDR_31</text><text x="1198" y="611">LDR_32</text><text x="1197" y="631">S2_b</text><text x="1197" y="641">S3_b</text></g>
<g stroke="#555" stroke-width="1.2" fill="none"><path d="M1175,527H1186M1186,521V533M1180,690V697M1173,697H1187M1176,699.5H1184M1179,702H1181"/></g>
<text class="gl" x="1188" y="531">5V</text>
<g stroke="#5cb85c" stroke-width="1.2" fill="none"><path d="M1175,617H1180V660M1095,637V690H1180"/></g>
<rect x="1177" y="660" width="7" height="21" fill="none" stroke="#b04848" stroke-width="1.3"/>
<path d="M1180,681V690" stroke="#555" stroke-width="1.2"/>
<circle cx="1180" cy="690" r="2.2" fill="#d00"/>
<text class="l" x="1187" y="674">R34</text><text class="l" x="1187" y="684">10kΩ</text>
<text class="g" x="1180" y="718">GND</text>

<!-- TITLE BLOCK -->
<g fill="none" stroke="#a85050" stroke-width="1.6">
 <rect x="1536" y="701" width="444" height="80"/>
 <path d="M1536,740H1980M1640,760H1980M1640,740V781M1900,701V760"/>
</g>
<text class="t" x="1542" y="714" style="font-size:10px">TITLE:</text>
<text class="tv" x="1599" y="727" style="font-size:13.5px">Placa abajo sensores color</text>
<text class="t" x="1906" y="729" style="font-size:10px">REV:</text><text class="tv" x="1944" y="729">1.0</text>
<text class="t" x="1646" y="754" style="font-size:10px">Company:</text><text class="tv" x="1712" y="754">Cr-Arioch</text>
<text class="t" x="1905" y="756" style="font-size:10px">Sheet:</text><text class="tv" x="1950" y="756">1/1</text>
<text class="t" x="1646" y="776" style="font-size:10px">Date:</text><text class="tv" x="1693" y="776">2023-05-03</text>
<text class="t" x="1785" y="776" style="font-size:10px">Drawn By:</text><text class="tv" x="1850" y="776">Alejandro.T</text>
<g fill="none" stroke="#4a7fe0" stroke-width="2.2"><path d="M1546,768a5,5 0 0 1 2,-10a7,7 0 0 1 13,1a4.5,4.5 0 0 1 0,9h-6"/><circle cx="1551" cy="767" r="2.2"/></g>
<text x="1563" y="768" style="font-family:'Liberation Sans','Noto Sans CJK SC',sans-serif;font-size:14px;font-weight:bold;font-style:italic;fill:#4a7fe0">嘉立创EDA</text>
</svg>
</body></html>
